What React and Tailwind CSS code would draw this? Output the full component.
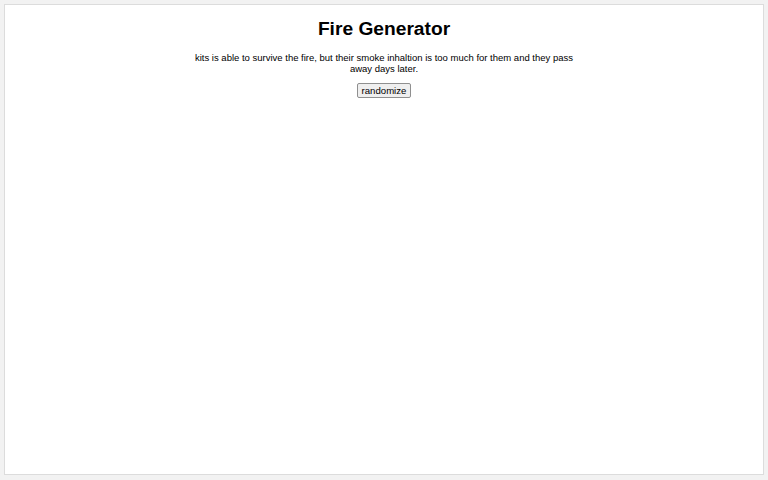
import React, { useState } from 'react';

const outcomes = [
  'kits is able to survive the fire, but their smoke inhaltion is too much for them and they pass away days later.',
];

const App = () => {
  const [text, setText] = useState(outcomes[0]);

  const randomize = () => {
    setText(outcomes[Math.floor(Math.random() * outcomes.length)]);
  };

  return (
    <div className="min-h-[480px] bg-[#f2f2f2] p-[4px] font-['Liberation_Sans',Arial,sans-serif] text-black">
      <div className="h-[471px] border border-[#dcdcdc] bg-white flex flex-col items-center pt-[12px]">
        <h1 className="text-[19.2px] font-bold leading-[24px]">Fire Generator</h1>
        <p className="mt-[11px] w-[384px] text-center text-[9.5px] leading-[11px]">{text}</p>
        <button
          onClick={randomize}
          className="mt-[9px] h-[15px] px-[4px] text-[9.6px] leading-[12px] bg-[#efefef] border border-[#8f8f8f] rounded-[2px]"
        >
          randomize
        </button>
      </div>
    </div>
  );
};

export default App;
